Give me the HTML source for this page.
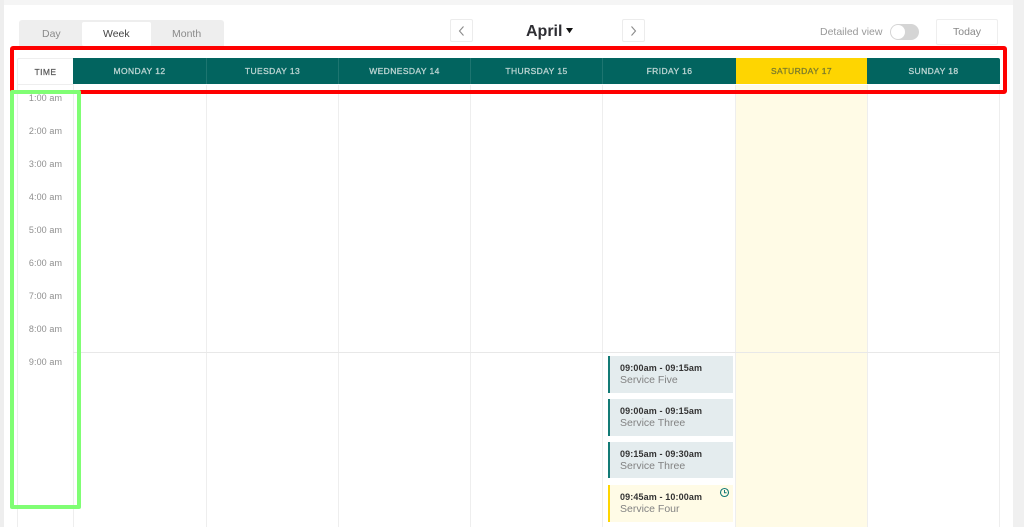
<!DOCTYPE html>
<html>
<head>
<meta charset="utf-8">
<style>
html,body{margin:0;padding:0;background:#fff}
body{position:relative;width:1024px;height:527px;overflow:hidden;font-family:"Liberation Sans",sans-serif;color:#777}
.a{position:absolute}
.t{position:absolute;white-space:nowrap;line-height:14px}
.vl{position:absolute;top:85px;height:442px;width:1px;background:#eeeeee}
.hd{position:absolute;top:58px;height:26px;line-height:27px;text-align:center;font-size:8.5px;letter-spacing:.4px;color:#bcd4d2;background:#02645f;border-right:1px solid #1d7570;box-sizing:border-box;font-weight:normal;-webkit-text-stroke:.3px #bcd4d2}
.tm{position:absolute;left:17px;width:57px;text-align:center;font-size:9px;color:#8f8f8f;line-height:12px;letter-spacing:.1px}
.ev{position:absolute;left:608px;width:125px;height:37px;box-sizing:border-box;border-left:2px solid #137a75;background:#e4ecee}
.ev b{position:absolute;left:10px;top:6px;font-size:9px;line-height:13px;color:#333;white-space:nowrap;letter-spacing:.12px}
.ev span{position:absolute;left:10px;top:17px;font-size:10.5px;line-height:14px;color:#828282;white-space:nowrap}
</style>
</head>
<body>
<div class="a" style="left:0;top:0;width:1024px;height:5px;background:#f5f5f5"></div>
<div class="a" style="left:0;top:0;width:4px;height:527px;background:#eeeeee"></div>
<div class="a" style="left:1013px;top:0;width:11px;height:527px;background:#f0f0f0"></div>

<div class="a" style="left:19px;top:20px;width:205px;height:26px;background:#eeeeee;border-radius:3px 3px 0 0"></div>
<div class="a" style="left:82px;top:22px;width:69px;height:24px;background:#fff;border-radius:2px"></div>
<div class="t" style="left:42px;top:27px;font-size:10.5px;color:#8a8a8a">Day</div>
<div class="t" style="left:103px;top:27px;font-size:10.5px;color:#444">Week</div>
<div class="t" style="left:172px;top:27px;font-size:10.5px;color:#8a8a8a">Month</div>

<div class="a" style="left:450px;top:19px;width:23px;height:23px;box-sizing:border-box;border:1px solid #ececec;border-radius:2px;background:#fff"></div>
<svg class="a" style="left:450px;top:19px" width="23" height="23" viewBox="0 0 23 23"><path d="M13.5 7.5 L9.5 12 L13.5 16.5" fill="none" stroke="#8a8a8a" stroke-width="1.1"/></svg>
<div class="t" style="left:526px;top:23px;font-size:16px;line-height:17px;font-weight:bold;color:#2e2e33">April</div>
<svg class="a" style="left:565px;top:27px" width="9" height="8" viewBox="0 0 9 8"><path d="M1 1 H8 L4.5 6.2 Z" fill="#111"/></svg>
<div class="a" style="left:622px;top:19px;width:23px;height:23px;box-sizing:border-box;border:1px solid #ececec;border-radius:2px;background:#fff"></div>
<svg class="a" style="left:622px;top:19px" width="23" height="23" viewBox="0 0 23 23"><path d="M9.5 7.5 L13.5 12 L9.5 16.5" fill="none" stroke="#8a8a8a" stroke-width="1.1"/></svg>

<div class="t" style="left:820px;top:25px;font-size:10.5px;color:#999">Detailed view</div>
<div class="a" style="left:890px;top:24px;width:29px;height:16px;border-radius:8px;background:#d5d5d5"></div>
<div class="a" style="left:891px;top:25px;width:14px;height:14px;border-radius:50%;background:#fff"></div>
<div class="a" style="left:936px;top:19px;width:62px;height:26px;box-sizing:border-box;border:1px solid #eeeeee;border-radius:2px;background:#fff"></div>
<div class="t" style="left:953px;top:25px;font-size:10.5px;color:#888">Today</div>

<!-- saturday background -->
<div class="a" style="left:735px;top:85px;width:132px;height:442px;background:#fffbe6"></div>

<!-- grid -->
<div class="vl" style="left:17px"></div>
<div class="vl" style="left:73px"></div>
<div class="vl" style="left:206px"></div>
<div class="vl" style="left:338px"></div>
<div class="vl" style="left:470px"></div>
<div class="vl" style="left:602px"></div>
<div class="vl" style="left:735px"></div>
<div class="vl" style="left:867px"></div>
<div class="vl" style="left:999px"></div>
<div class="a" style="left:73px;top:352px;width:927px;height:1px;background:#e8e8e8"></div>

<!-- header -->
<div class="a" style="left:17px;top:58px;width:57px;height:27px;box-sizing:border-box;border:1px solid #eeeeee;border-right:none;border-radius:2px 0 0 0;background:#fff"></div>
<div class="t" style="left:17px;top:65px;width:57px;text-align:center;font-size:8.5px;letter-spacing:.4px;color:#555;-webkit-text-stroke:.2px #555">TIME</div>
<div class="hd" style="left:73px;width:134px">MONDAY 12</div>
<div class="hd" style="left:207px;width:132px">TUESDAY 13</div>
<div class="hd" style="left:339px;width:132px">WEDNESDAY 14</div>
<div class="hd" style="left:471px;width:132px">THURSDAY 15</div>
<div class="hd" style="left:603px;width:133px;border-right:none">FRIDAY 16</div>
<div class="hd" style="left:736px;width:131px;background:#fed501;color:#7c7c2c;border-right:none;-webkit-text-stroke:.3px #7c7c2c">SATURDAY 17</div>
<div class="hd" style="left:867px;width:133px;border-right:none;border-radius:0 2px 0 0">SUNDAY 18</div>

<!-- times -->
<div class="tm" style="top:92px">1:00 am</div>
<div class="tm" style="top:125px">2:00 am</div>
<div class="tm" style="top:158px">3:00 am</div>
<div class="tm" style="top:191px">4:00 am</div>
<div class="tm" style="top:224px">5:00 am</div>
<div class="tm" style="top:257px">6:00 am</div>
<div class="tm" style="top:290px">7:00 am</div>
<div class="tm" style="top:323px">8:00 am</div>
<div class="tm" style="top:356px">9:00 am</div>

<!-- events -->
<div class="ev" style="top:356px"><b>09:00am - 09:15am</b><span>Service Five</span></div>
<div class="ev" style="top:399px"><b>09:00am - 09:15am</b><span>Service Three</span></div>
<div class="ev" style="top:442px;height:36px"><b>09:15am - 09:30am</b><span>Service Three</span></div>
<div class="ev" style="top:485px;border-left-color:#fed501;background:#fffbe6"><b>09:45am - 10:00am</b><span>Service Four</span></div>
<svg class="a" style="left:719px;top:487px" width="11" height="11" viewBox="0 0 11 11"><circle cx="5.5" cy="5.5" r="4" fill="none" stroke="#137a75" stroke-width="1.1"/><path d="M5.5 3 V5.8 H7.6" fill="none" stroke="#137a75" stroke-width="1"/></svg>

<!-- annotation boxes -->
<div class="a" style="left:10px;top:46px;width:997px;height:48px;box-sizing:border-box;border:4px solid #fe0000;border-radius:3px"></div>
<div class="a" style="left:10px;top:90px;width:71px;height:419px;box-sizing:border-box;border:4px solid #80fe74;border-radius:2px"></div>
</body>
</html>
